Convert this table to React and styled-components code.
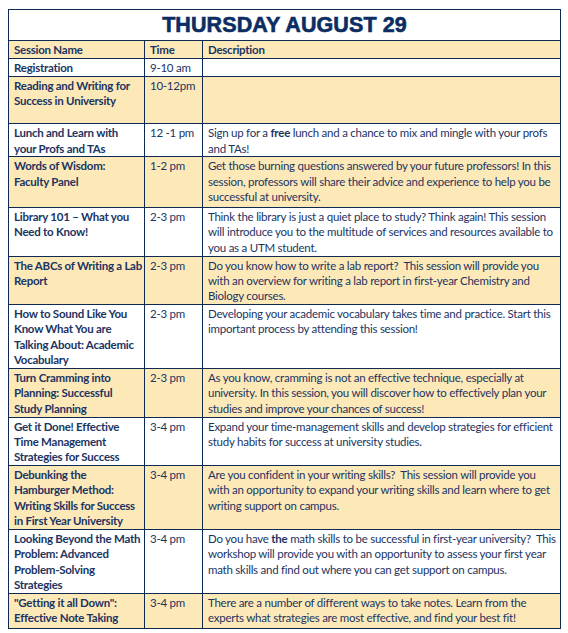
import React from 'react';
import styled, { createGlobalStyle } from 'styled-components';

const GlobalStyle = createGlobalStyle`
  html, body {
    margin: 0;
    padding: 0;
    background: #ffffff;
  }
  body {
    padding: 9px 8px 0 8px;
    font-family: Lato, "Open Sans", "Liberation Sans", sans-serif;
  }
`;

const navy = '#0f2a52';
const ink = '#1c3462';
const beige = '#fde9b8';
const LH = 15.35;

const Schedule = styled.table`
  width: 553px;
  table-layout: fixed;
  border-collapse: collapse;
  border: 1.5px solid ${navy};
  color: ${ink};
  font-size: 11.5px;
  letter-spacing: -0.25px;
  line-height: ${LH}px;
`;

const TitleCell = styled.th`
  height: 30px;
  padding: 0;
  border: 1.5px solid ${navy};
  background: #ffffff;
  text-align: center;
  vertical-align: middle;
  font-family: "Liberation Sans", Arial, sans-serif;
  font-size: 21.5px;
  font-weight: 700;
  letter-spacing: 0.1px;
  color: #0b2d62;
  -webkit-text-stroke: 0.6px #0b2d62;
  line-height: 30px;
`;

const Row = styled.tr`
  background: ${(p) => (p.$tint ? beige : '#ffffff')};
  height: ${(p) => (p.$lines ? `${p.$lines * LH + 1.5}px` : 'auto')};
`;

const Cell = styled.td`
  border: 1.5px solid ${navy};
  padding: 1px 3px 0.5px 5px;
  vertical-align: top;
  white-space: nowrap;
  overflow: hidden;
  font-weight: ${(p) => (p.$bold ? 700 : 400)};
`;

const HeadCell = styled(Cell).attrs({ as: 'th' })`
  text-align: left;
  font-weight: 700;
`;

const Line = styled.div`
  white-space: nowrap;
`;

const Strong = styled.b`
  font-weight: 700;
`;

const sessions = [
  {
    name: ['Registration'],
    time: '9-10 am',
    desc: [],
  },
  {
    name: ['Reading and Writing for', 'Success in University'],
    time: '10-12pm',
    desc: [],
    lines: 3,
  },
  {
    name: ['Lunch and Learn with', 'your Profs and TAs'],
    time: '12 -1 pm',
    desc: [
      <>Sign up for a <Strong>free</Strong> lunch and a chance to mix and mingle with your profs</>,
      'and TAs!',
    ],
  },
  {
    name: ['Words of Wisdom:', 'Faculty Panel'],
    time: '1-2 pm',
    desc: [
      'Get those burning questions answered by your future professors! In this',
      'session, professors will share their advice and experience to help you be',
      'successful at university.',
    ],
    lines: 3.2,
  },
  {
    name: ['Library 101 \u2013 What you', 'Need to Know!'],
    time: '2-3 pm',
    desc: [
      'Think the library is just a quiet place to study? Think again! This session',
      'will introduce you to the multitude of services and resources available to',
      'you as a UTM student.',
    ],
  },
  {
    name: ['The ABCs of Writing a Lab', 'Report'],
    time: '2-3 pm',
    desc: [
      'Do you know how to write a lab report?\u00a0 This session will provide you',
      'with an overview for writing a lab report in first-year Chemistry and',
      'Biology courses.',
    ],
  },
  {
    name: ['How to Sound Like You', 'Know What You are', 'Talking About: Academic', 'Vocabulary'],
    time: '2-3 pm',
    desc: [
      'Developing your academic vocabulary takes time and practice. Start this',
      'important process by attending this session!',
    ],
  },
  {
    name: ['Turn Cramming into', 'Planning: Successful', 'Study Planning'],
    time: '2-3 pm',
    desc: [
      'As you know, cramming is not an effective technique, especially at',
      'university. In this session, you will discover how to effectively plan your',
      'studies and improve your chances of success!',
    ],
  },
  {
    name: ['Get it Done! Effective', 'Time Management', 'Strategies for Success'],
    time: '3-4 pm',
    desc: [
      'Expand your time-management skills and develop strategies for efficient',
      'study habits for success at university studies.',
    ],
  },
  {
    name: ['Debunking the', 'Hamburger Method:', 'Writing Skills for Success', 'in First Year University'],
    time: '3-4 pm',
    desc: [
      'Are you confident in your writing skills?\u00a0 This session will provide you',
      'with an opportunity to expand your writing skills and learn where to get',
      'writing support on campus.',
    ],
  },
  {
    name: ['Looking Beyond the Math', 'Problem: Advanced', 'Problem-Solving', 'Strategies'],
    time: '3-4 pm',
    desc: [
      <>Do you have <Strong>the</Strong> math skills to be successful in first-year university?&nbsp; This</>,
      'workshop will provide you with an opportunity to assess your first year',
      'math skills and find out where you can get support on campus.',
    ],
  },
  {
    name: ['"Getting it all Down":', 'Effective Note Taking'],
    time: '3-4 pm',
    desc: [
      'There are a number of different ways to take notes. Learn from the',
      'experts what strategies are most effective, and find your best fit!',
    ],
    lines: 2.2,
  },
];

export default function App() {
  return (
    <>
      <GlobalStyle />
      <Schedule>
        <colgroup>
          <col style={{ width: 136 }} />
          <col style={{ width: 58 }} />
          <col />
        </colgroup>
        <thead>
          <tr>
            <TitleCell colSpan={3}>THURSDAY AUGUST 29</TitleCell>
          </tr>
          <Row $tint>
            <HeadCell>Session Name</HeadCell>
            <HeadCell>Time</HeadCell>
            <HeadCell>Description</HeadCell>
          </Row>
        </thead>
        <tbody>
          {sessions.map((s, i) => (
            <Row key={i} $tint={i % 2 === 1} $lines={s.lines}>
              <Cell $bold>
                {s.name.map((l, j) => (
                  <Line key={j}>{l}</Line>
                ))}
              </Cell>
              <Cell>{s.time}</Cell>
              <Cell>
                {s.desc.map((l, j) => (
                  <Line key={j}>{l}</Line>
                ))}
              </Cell>
            </Row>
          ))}
        </tbody>
      </Schedule>
    </>
  );
}
